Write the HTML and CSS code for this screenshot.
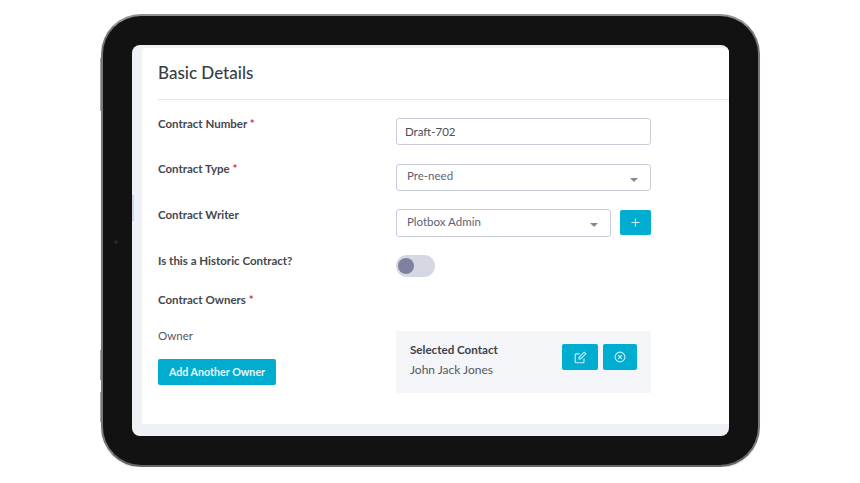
FILE: index.html
```html
<!DOCTYPE html>
<html lang="en">
<head>
    <meta charset="UTF-8">
    <meta name="viewport" content="width=device-width, initial-scale=1.0">
    <title>Basic Details</title>
    <link rel="stylesheet" href="styles.css">
</head>
<body>
<div class="tablet">
    <span class="side-btn side-btn-1"></span>
    <span class="side-btn side-btn-2"></span>
    <span class="side-btn side-btn-3"></span>
    <span class="camera"></span>
    <div class="screen">
        <span class="screen-tab"></span>
        <div class="panel">
            <h1 class="panel-title">Basic Details</h1>
            <div class="form">
                <div class="row row-number">
                    <label>Contract Number <span class="req">*</span></label>
                    <div class="field input-box">Draft-702</div>
                </div>
                <div class="row row-type">
                    <label>Contract Type <span class="req">*</span></label>
                    <div class="field select-box">Pre-need<span class="caret"></span></div>
                </div>
                <div class="row row-writer">
                    <label>Contract Writer</label>
                    <div class="writer">
                        <div class="field select-box">Plotbox Admin<span class="caret"></span></div>
                        <button class="btn btn-plus">
                            <svg width="9" height="9" viewBox="0 0 10 10"><path d="M5 .5v9M.5 5h9" stroke="#cdeef6" stroke-width="1.3" fill="none"/></svg>
                        </button>
                    </div>
                </div>
                <div class="row row-historic">
                    <label>Is this a Historic Contract?</label>
                    <div class="toggle"><span class="knob"></span></div>
                </div>
                <div class="row row-owners">
                    <label>Contract Owners <span class="req">*</span></label>
                </div>
                <div class="row row-contact">
                    <div class="owner">
                        <p class="owner-label">Owner</p>
                        <button class="btn btn-add">Add Another Owner</button>
                    </div>
                    <div class="contact">
                        <div class="contact-text">
                            <h4>Selected Contact</h4>
                            <p>John Jack Jones</p>
                        </div>
                        <div class="contact-actions">
                            <button class="btn btn-edit">
                                <svg width="13" height="13" viewBox="0 0 13 13" fill="none" stroke="#cdeef6" stroke-width="1.1"><path d="M10 7.5v3.2a1 1 0 0 1-1 1H2.2a1 1 0 0 1-1-1V3.9a1 1 0 0 1 1-1h3.4"/><path d="M5 6.4 10.2 1.2l1.6 1.6L6.6 8H5z"/></svg>
                            </button>
                            <button class="btn btn-remove">
                                <svg width="12" height="12" viewBox="0 0 12 12" fill="none" stroke="#cdeef6" stroke-width="1.1"><circle cx="6" cy="6" r="4.9"/><path d="M4.2 4.2l3.6 3.6M7.8 4.2 4.2 7.8"/></svg>
                            </button>
                        </div>
                    </div>
                </div>
            </div>
        </div>
    </div>
</div>
</body>
</html>
```

FILE: styles.css
```css
* {
    box-sizing: border-box;
}
body {
    margin: 0;
    padding: 14px 0 0 101px;
    background-color: #fff;
    font-family: "Lato", "Liberation Sans", sans-serif;
    color: #3f4147;
    overflow: hidden;
}
.tablet {
    position: relative;
    width: 659px;
    height: 453px;
    padding: 31px;
    background-color: #121212;
    border: 2px solid #77777a;
    border-top-color: #919194;
    border-bottom-color: #666668;
    border-radius: 40px;
    box-shadow: 0 2px 2px -1px #d8d8d8;
}
.tablet > .screen {
    margin: -2px;
}
.side-btn {
    position: absolute;
    left: -3px;
    width: 1px;
    background-color: #a4a4a6;
}
.side-btn-1 {
    top: 42px;
    height: 53px;
}
.side-btn-2 {
    top: 334px;
    height: 30px;
}
.side-btn-3 {
    top: 376px;
    height: 30px;
}
.camera {
    position: absolute;
    left: 11px;
    top: 224px;
    width: 4px;
    height: 4px;
    border-radius: 50%;
    background-color: #1d2a3a;
}
.screen {
    position: relative;
    height: 391px;
    padding: 3px 0 12px 10px;
    background-color: #eef1f6;
    border-radius: 8px;
    overflow: hidden;
}
.screen-tab {
    position: absolute;
    left: 0;
    top: 150px;
    width: 2px;
    height: 26px;
    background-color: #cfd8e4;
}
.panel {
    height: 100%;
    padding: 0 0 0 16px;
    background-color: #fff;
    border-radius: 4px 0 0 0;
}
.panel-title {
    height: 52px;
    margin: 0;
    padding-top: 14px;
    font-size: 17px;
    font-weight: 500;
    line-height: 22px;
    color: #3a3c42;
    border-bottom: 1px solid #e3e7ec;
}
.form {
    padding-top: 18px;
}
.row {
    display: grid;
    grid-template-columns: 238px 255px;
    align-items: start;
}
.row label {
    font-size: 11.5px;
    font-weight: 700;
    line-height: 14px;
    color: #45474d;
}
.req {
    color: #d9304f;
}
.row-type {
    margin-top: 19px;
}
.row-writer {
    margin-top: 18px;
}
.row-historic {
    margin-top: 18px;
}
.row-owners {
    margin-top: 16px;
}
.row-contact {
    margin-top: 24px;
}
.row-number label,
.row-writer label,
.row-historic label {
    margin-top: -1px;
}
.row-type label {
    margin-top: -2px;
}
.field {
    position: relative;
    height: 27px;
    font-size: 11.5px;
    line-height: 25px;
    background-color: #fff;
    border: 1px solid #c9ccd8;
    border-radius: 3px;
}
.input-box {
    padding-left: 8px;
    color: #4c4e55;
}
.select-box {
    padding-left: 10px;
    line-height: 22px;
    color: #5d6273;
}
.caret {
    position: absolute;
    right: 12px;
    top: 13px;
    border-left: 4px solid transparent;
    border-right: 4px solid transparent;
    border-top: 4px solid #85888f;
}
.writer {
    display: flex;
    gap: 9px;
}
.writer .field {
    width: 215px;
    height: 28px;
    line-height: 24px;
}
.btn {
    display: flex;
    align-items: center;
    justify-content: center;
    padding: 0;
    border: none;
    border-radius: 2px;
    background-color: #00add0;
    font-family: inherit;
}
.btn-plus {
    width: 31px;
    height: 25px;
    margin-top: 1px;
}
.toggle {
    width: 39px;
    height: 22px;
    padding: 3px 2px;
    border-radius: 11px;
    background-color: #d5d7e2;
}
.knob {
    display: block;
    width: 16px;
    height: 16px;
    border-radius: 50%;
    background-color: #7e829e;
}
.owner-label {
    margin: 0;
    font-size: 11.5px;
    line-height: 14px;
    color: #55575c;
}
.btn-add {
    width: 118px;
    height: 26px;
    margin-top: 16px;
    padding-bottom: 2px;
    font-size: 10.7px;
    font-weight: 700;
    color: #e6f7fb;
}
.owner {
    margin-top: -2px;
}
.contact {
    display: flex;
    justify-content: space-between;
    align-items: flex-start;
    height: 62px;
    padding: 12px 14px 0;
    background-color: #f3f5f9;
    border-radius: 2px;
}
.contact h4 {
    margin: 0;
    font-size: 11.6px;
    font-weight: 700;
    line-height: 14px;
    color: #3f4147;
}
.contact p {
    margin: 6px 0 0;
    font-size: 12px;
    line-height: 14px;
    color: #55575c;
}
.contact-actions {
    display: flex;
    gap: 5px;
    margin-top: 1px;
}
.btn-edit {
    width: 36px;
    height: 26px;
}
.btn-remove {
    width: 34px;
    height: 26px;
}
```
